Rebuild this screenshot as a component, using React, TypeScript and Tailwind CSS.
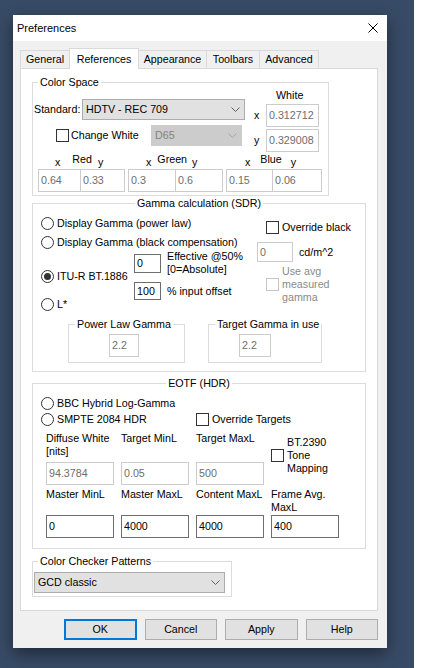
import clsx from "clsx";
import type { ReactNode } from "react";

function Chevron({ disabled = false }: { disabled?: boolean }) {
  return (
    <svg width="9" height="5" viewBox="0 0 9 5" className="shrink-0 mr-[4px]" aria-hidden="true">
      <path
        d="M0.5 0.5 L4.5 4.5 L8.5 0.5"
        fill="none"
        stroke={disabled ? "#a6a6a6" : "#606060"}
        strokeWidth="1"
      />
    </svg>
  );
}

function Combo({ value, disabled = false, className }: { value: string; disabled?: boolean; className?: string }) {
  return (
    <div
      className={clsx(
        "flex items-center border shrink-0",
        disabled ? "bg-[#cccccc] border-[#cccccc] text-[#838383]" : "bg-[#e1e1e1] border-[#adadad]",
        className
      )}
    >
      <span className="flex-1 pl-[3px] whitespace-nowrap">{value}</span>
      <Chevron disabled={disabled} />
    </div>
  );
}

function Edit({ value, disabled = false, className }: { value: string; disabled?: boolean; className?: string }) {
  return (
    <div
      className={clsx(
        "flex items-center border bg-white pl-[2px] shrink-0 whitespace-nowrap",
        disabled ? "border-[#cccccc] text-[#6d6d6d]" : "border-[#6e6e6e]",
        className
      )}
    >
      {value}
    </div>
  );
}

function Check({ disabled = false, className }: { disabled?: boolean; className?: string }) {
  return (
    <span
      className={clsx(
        "block w-[13px] h-[13px] border bg-white shrink-0",
        disabled ? "border-[#c4c4c4]" : "border-[#333333]",
        className
      )}
    />
  );
}

function Radio({ checked = false }: { checked?: boolean }) {
  return (
    <span className="flex w-[13px] h-[13px] rounded-full border border-[#333333] bg-white items-center justify-center shrink-0">
      {checked && <span className="block w-[7px] h-[7px] rounded-full bg-[#333333]" />}
    </span>
  );
}

function RadioRow({ label, checked, className }: { label: string; checked?: boolean; className?: string }) {
  return (
    <div className={clsx("flex items-center h-[16px] pl-[8px]", className)}>
      <Radio checked={checked} />
      <span className="ml-[3px] whitespace-nowrap">{label}</span>
    </div>
  );
}

function Group({
  label,
  center = false,
  labelClass = "left-[5px]",
  className,
  children,
}: {
  label: string;
  center?: boolean;
  labelClass?: string;
  className?: string;
  children?: ReactNode;
}) {
  return (
    <div className={clsx("relative border border-[#dcdcdc] shrink-0", className)}>
      <span
        className={clsx(
          "absolute -top-[7px] bg-white px-[2px] leading-[13px] whitespace-nowrap",
          center ? "left-1/2 -translate-x-1/2" : labelClass
        )}
      >
        {label}
      </span>
      {children}
    </div>
  );
}

function Button({ label, primary = false }: { label: string; primary?: boolean }) {
  return (
    <div
      className={clsx(
        "w-[73px] h-[21px] flex items-center justify-center bg-[#e1e1e1]",
        primary ? "border-2 border-[#0078d7]" : "border border-[#adadad]"
      )}
    >
      {label}
    </div>
  );
}

const tabs = [
  { name: "General", w: "w-[50px]" },
  { name: "References", w: "w-[70px]", active: true },
  { name: "Appearance", w: "w-[69px]" },
  { name: "Toolbars", w: "w-[54px]" },
  { name: "Advanced", w: "w-[60px]" },
];

export default function App() {
  return (
    <div className="w-[422px] h-[668px] flex bg-[#384b66] overflow-hidden font-['Liberation_Sans',Arial,sans-serif] text-[10.7px] leading-[13px] text-black">
      <div className="w-[414px] pl-[13px] pt-[15px]">
        <div className="w-[374px] h-[633px] bg-[#f0f0f0] flex flex-col shadow-[0_6px_16px_rgba(0,0,0,0.45)]">
          {/* title bar */}
          <div className="h-[26px] bg-white flex items-center pl-[4px] pr-[9px] shrink-0">
            <span className="flex-1 text-[11px]">Preferences</span>
            <svg width="10" height="10" viewBox="0 0 10 10" aria-hidden="true">
              <path d="M0.5 0.5 L9.5 9.5 M9.5 0.5 L0.5 9.5" stroke="#000" strokeWidth="1" />
            </svg>
          </div>

          <div className="flex flex-col pl-[7px] pr-[9px] pt-[7px]">
            {/* tabs */}
            <div className="flex items-end h-[20px]">
              {tabs.map((t, i) => (
                <div
                  key={t.name}
                  className={clsx(
                    "flex items-center justify-center border-t border-l border-r border-[#d9d9d9]",
                    t.w,
                    i > 0 && "-ml-px",
                    t.active ? "h-[21px] -mb-px bg-white relative z-10" : "h-[18px] bg-[#f0f0f0]"
                  )}
                >
                  {t.name}
                </div>
              ))}
            </div>

            {/* panel */}
            <div className="h-[543px] bg-white border border-[#d9d9d9] flex flex-col">
              {/* Color Space */}
              <Group label="Color Space" className="ml-[11px] mt-[13px] w-[297px] h-[114px]">
                <div className="flex h-[69px]">
                  <div className="w-[221px] flex flex-col">
                    <div className="mt-[16px] flex items-center h-[21px]">
                      <span className="ml-[1px] w-[48px]">Standard:</span>
                      <Combo value="HDTV - REC 709" className="w-[163px] h-[21px]" />
                    </div>
                    <div className="mt-[5px] flex items-center h-[21px]">
                      <Check className="ml-[23px]" />
                      <span className="ml-[2px] w-[80px] whitespace-nowrap">Change White</span>
                      <Combo value="D65" disabled className="w-[91px] h-[21px]" />
                    </div>
                  </div>
                  <div className="flex flex-col">
                    <div className="mt-[6px] h-[13px] pl-[22px]">White</div>
                    <div className="mt-[2px] flex items-center">
                      <span className="w-[12px]">x</span>
                      <Edit value="0.312712" disabled className="w-[53px] h-[23px]" />
                    </div>
                    <div className="mt-[2px] flex items-center">
                      <span className="w-[12px]">y</span>
                      <Edit value="0.329008" disabled className="w-[53px] h-[23px]" />
                    </div>
                  </div>
                </div>
                <div className="flex h-[17px] ml-[5px] gap-[3px]">
                  <div className="w-[87px] flex">
                    <span className="mt-[4px] ml-[17px]">x</span>
                    <span className="mt-[1px] ml-[12px]">Red</span>
                    <span className="mt-[4px] ml-[6px]">y</span>
                  </div>
                  <div className="w-[95px] flex">
                    <span className="mt-[4px] ml-[18px]">x</span>
                    <span className="mt-[1px] ml-[6px]">Green</span>
                    <span className="mt-[4px] ml-[5px]">y</span>
                  </div>
                  <div className="w-[96px] flex">
                    <span className="mt-[4px] ml-[19px]">x</span>
                    <span className="mt-[1px] ml-[10px]">Blue</span>
                    <span className="mt-[4px] ml-[9px]">y</span>
                  </div>
                </div>
                <div className="flex h-[23px] ml-[5px] gap-[3px]">
                  <div className="flex">
                    <Edit value="0.64" disabled className="w-[43px] h-[23px]" />
                    <Edit value="0.33" disabled className="w-[45px] h-[23px] -ml-px" />
                  </div>
                  <div className="flex">
                    <Edit value="0.3" disabled className="w-[48px] h-[23px]" />
                    <Edit value="0.6" disabled className="w-[48px] h-[23px] -ml-px" />
                  </div>
                  <div className="flex">
                    <Edit value="0.15" disabled className="w-[47px] h-[23px]" />
                    <Edit value="0.06" disabled className="w-[50px] h-[23px] -ml-px" />
                  </div>
                </div>
              </Group>

              {/* Gamma calculation */}
              <Group label="Gamma calculation (SDR)" center className="ml-[11px] mt-[7px] w-[334px] h-[169px]">
                <div className="flex h-[108px]">
                  <div className="w-[224px] flex flex-col">
                    <RadioRow label="Display Gamma (power law)" className="mt-[11px]" />
                    <RadioRow label="Display Gamma (black compensation)" className="mt-[3px]" />
                    <div className="flex">
                      <div className="w-[101px] flex flex-col">
                        <RadioRow label="ITU-R BT.1886" checked className="mt-[18px]" />
                        <RadioRow label="L*" className="mt-[12px]" />
                      </div>
                      <div className="flex flex-col">
                        <div className="flex items-center h-[26px]">
                          <Edit value="0" className="w-[27px] h-[19px]" />
                          <span className="ml-[6px] whitespace-nowrap">
                            Effective @50%
                            <br />
                            [0=Absolute]
                          </span>
                        </div>
                        <div className="flex items-center mt-[6px]">
                          <Edit value="100" className="w-[27px] h-[18px]" />
                          <span className="ml-[6px] whitespace-nowrap">% input offset</span>
                        </div>
                      </div>
                    </div>
                  </div>
                  <div className="flex flex-col">
                    <div className="mt-[15px] h-[16px] flex items-center pl-[9px]">
                      <Check />
                      <span className="ml-[3px] whitespace-nowrap">Override black</span>
                    </div>
                    <div className="mt-[7px] flex items-center">
                      <Edit value="0" disabled className="w-[36px] h-[20px]" />
                      <span className="ml-[6px]">cd/m^2</span>
                    </div>
                    <div className="mt-[3px] flex items-center pl-[9px]">
                      <Check disabled />
                      <span className="ml-[3px] text-[#8a8a8a]">
                        Use avg
                        <br />
                        measured
                        <br />
                        gamma
                      </span>
                    </div>
                  </div>
                </div>
                <div className="flex mt-[12px]">
                  <Group label="Power Law Gamma" labelClass="left-[6px]" className="ml-[35px] w-[117px] h-[39px]">
                    <Edit value="2.2" disabled className="ml-[40px] mt-[9px] w-[30px] h-[23px]" />
                  </Group>
                  <Group label="Target Gamma in use" labelClass="left-[6px]" className="ml-[23px] w-[114px] h-[39px]">
                    <Edit value="2.2" disabled className="ml-[30px] mt-[9px] w-[32px] h-[23px]" />
                  </Group>
                </div>
              </Group>

              {/* EOTF */}
              <Group label="EOTF (HDR)" center className="ml-[11px] mt-[11px] w-[334px] h-[166px]">
                <RadioRow label="BBC Hybrid Log-Gamma" className="mt-[11px]" />
                <div className="flex items-center h-[16px]">
                  <RadioRow label="SMPTE 2084 HDR" className="w-[163px]" />
                  <Check />
                  <span className="ml-[3px] whitespace-nowrap">Override Targets</span>
                </div>
                <div className="flex ml-[13px] mt-[5px]">
                  <div className="flex flex-col">
                    <div className="flex h-[30px] gap-[7px]">
                      <span className="w-[68px] whitespace-nowrap">
                        Diffuse White
                        <br />
                        [nits]
                      </span>
                      <span className="w-[68px] whitespace-nowrap">Target MinL</span>
                      <span className="w-[68px] whitespace-nowrap">Target MaxL</span>
                    </div>
                    <div className="flex gap-[7px]">
                      <Edit value="94.3784" disabled className="w-[68px] h-[23px]" />
                      <Edit value="0.05" disabled className="w-[68px] h-[23px]" />
                      <Edit value="500" disabled className="w-[68px] h-[23px]" />
                    </div>
                  </div>
                  <div className="ml-[7px] w-[68px] mt-[4px] flex items-center self-start">
                    <Check />
                    <span className="ml-[3px]">
                      BT.2390
                      <br />
                      Tone
                      <br />
                      Mapping
                    </span>
                  </div>
                </div>
                <div className="flex flex-col ml-[13px]">
                  <div className="flex h-[30px] pt-[3px] gap-[7px]">
                    <span className="w-[68px] whitespace-nowrap">Master MinL</span>
                    <span className="w-[68px] whitespace-nowrap">Master MaxL</span>
                    <span className="w-[68px] whitespace-nowrap">Content MaxL</span>
                    <span className="w-[68px]">
                      Frame Avg.
                      <br />
                      MaxL
                    </span>
                  </div>
                  <div className="flex gap-[7px]">
                    <Edit value="0" className="w-[68px] h-[23px]" />
                    <Edit value="4000" className="w-[68px] h-[23px]" />
                    <Edit value="4000" className="w-[68px] h-[23px]" />
                    <Edit value="400" className="w-[68px] h-[23px]" />
                  </div>
                </div>
              </Group>

              {/* Color Checker */}
              <Group label="Color Checker Patterns" className="ml-[11px] mt-[12px] w-[200px] h-[36px]">
                <Combo value="GCD classic" className="ml-[1px] mt-[10px] w-[191px] h-[21px]" />
              </Group>
            </div>

            {/* buttons */}
            <div className="flex gap-[8px] ml-[44px] mt-[8px]">
              <Button label="OK" primary />
              <Button label="Cancel" />
              <Button label="Apply" />
              <Button label="Help" />
            </div>
          </div>
        </div>
      </div>
      <div className="flex-1 bg-white" />
    </div>
  );
}
